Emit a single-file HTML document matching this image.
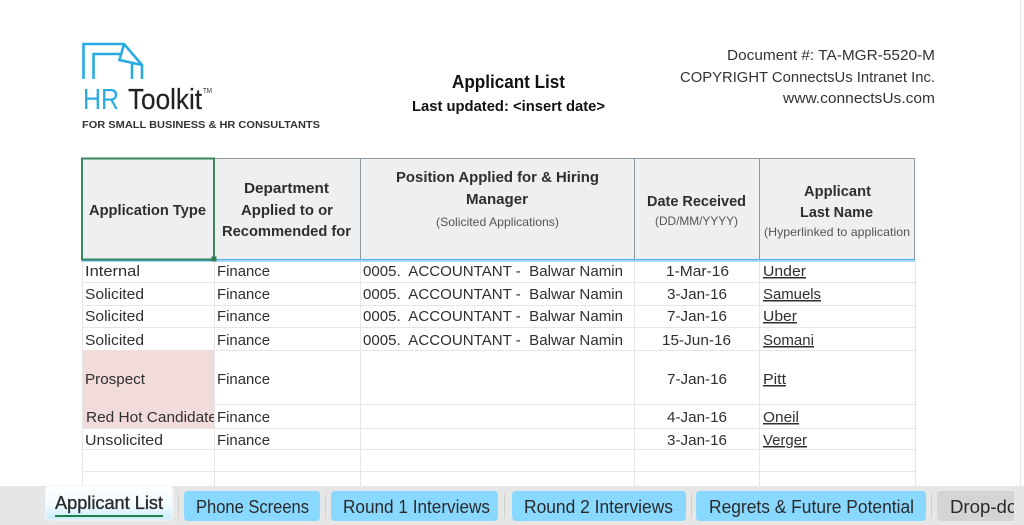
<!DOCTYPE html>
<html><head><meta charset="utf-8"><style>
html,body{margin:0;padding:0;background:#fff;width:1024px;height:525px;overflow:hidden}
svg{display:block}
text{font-family:"Liberation Sans",sans-serif;fill:#2f2f2f;font-size:15px}
.h{font-weight:bold;font-size:15px;fill:#2e2e2e}
.s{font-size:12px;fill:#555}
.t{font-size:18px;fill:#2a2a2a}
.l{text-decoration:underline}
</style></head><body>
<svg width="1024" height="525" viewBox="0 0 1024 525" xmlns="http://www.w3.org/2000/svg">
<defs><clipPath id="c"><rect x="82" y="400" width="132" height="30"/></clipPath>
<clipPath id="d"><rect x="937" y="488" width="77" height="37"/></clipPath>
<linearGradient id="g" x1="0" y1="0" x2="0" y2="1"><stop offset="0" stop-color="#fff"/><stop offset=".55" stop-color="#f2faff"/><stop offset="1" stop-color="#c9ecfd"/></linearGradient></defs>

<!-- logo -->
<g fill="none" stroke="#29abe2" stroke-width="2.600">
<path d="M83.500 79V44H124L142 65V79"/>
<path d="M93.500 79V54H120"/>
<path d="M124 44L119.500 60L142 65"/>
<path d="M132 63V79"/>
</g>
<text x="83" y="109" style="font-size:29px;fill:#29abe2" textLength="36" lengthAdjust="spacingAndGlyphs">HR</text>
<text x="128" y="109" style="font-size:29px;fill:#222;stroke:#222;stroke-width:.2" textLength="74" lengthAdjust="spacingAndGlyphs">Toolkit</text>
<text x="203" y="93" style="font-size:7px;fill:#333" textLength="9" lengthAdjust="spacingAndGlyphs">TM</text>
<text x="82" y="128" style="font-size:10px;font-weight:bold;fill:#333" textLength="238" lengthAdjust="spacingAndGlyphs">FOR SMALL BUSINESS &amp; HR CONSULTANTS</text>

<!-- titles -->
<text x="452" y="88" style="font-size:18px;font-weight:bold;fill:#111" textLength="113" lengthAdjust="spacingAndGlyphs">Applicant List</text>
<text x="412" y="111" style="font-size:15px;font-weight:bold;fill:#111" textLength="193" lengthAdjust="spacingAndGlyphs">Last updated: &lt;insert date&gt;</text>
<text x="727" y="60" style="fill:#333" textLength="208" lengthAdjust="spacingAndGlyphs">Document #: TA-MGR-5520-M</text>
<text x="680" y="82" style="fill:#333" textLength="255" lengthAdjust="spacingAndGlyphs">COPYRIGHT ConnectsUs Intranet Inc.</text>
<text x="783" y="103" style="fill:#333" textLength="152" lengthAdjust="spacingAndGlyphs">www.connectsUs.com</text>

<!-- header -->
<rect x="82" y="158" width="833" height="101" fill="#eeeff1"/>
<g stroke="#8f979f" stroke-width="1" fill="none">
<path d="M214.500 158V259M360.500 158V259M634.500 158V259M759.500 158V259M914.500 158V259M214 158.500H915"/>
</g>
<path d="M82 259.500H915" stroke="#4fb3e8" stroke-width="1"/>
<path d="M82 261H915" stroke="#4fb3e8" stroke-width="1"/>

<!-- pink -->
<rect x="82" y="350" width="132" height="78" fill="#f2dbdb"/>

<!-- grid -->
<g stroke="#e6e6e6" stroke-width="1" fill="none">
<path d="M82.500 262V486M214.500 262V486M360.500 262V486M634.500 262V486M759.500 262V486M915.500 262V486M1020.500 0V486"/>
<path d="M82 282.500H915M82 305.500H915M82 327.500H915M214 350.500H915M214 404.500H915M82 428.500H915M82 449.500H915M82 471.500H915"/>
</g>

<!-- selection -->
<rect x="82" y="158.500" width="132" height="101" fill="none" stroke="#3a8460" stroke-width="2"/>
<rect x="211.500" y="256.500" width="5" height="5" fill="#2f7d55"/>

<!-- header text -->
<text class="h" x="89" y="215" textLength="117" lengthAdjust="spacingAndGlyphs">Application Type</text>
<text class="h" x="244" y="193" textLength="85" lengthAdjust="spacingAndGlyphs">Department</text>
<text class="h" x="241" y="215" textLength="92" lengthAdjust="spacingAndGlyphs">Applied to or</text>
<text class="h" x="222" y="236" textLength="129" lengthAdjust="spacingAndGlyphs">Recommended for</text>
<text class="h" x="396" y="182" textLength="203" lengthAdjust="spacingAndGlyphs">Position Applied for &amp; Hiring</text>
<text class="h" x="466" y="204" textLength="62" lengthAdjust="spacingAndGlyphs">Manager</text>
<text class="s" x="436" y="226" textLength="123" lengthAdjust="spacingAndGlyphs">(Solicited Applications)</text>
<text class="h" x="647" y="206" textLength="99" lengthAdjust="spacingAndGlyphs">Date Received</text>
<text class="s" x="655" y="225" textLength="83" lengthAdjust="spacingAndGlyphs">(DD/MM/YYYY)</text>
<text class="h" x="804" y="196" textLength="67" lengthAdjust="spacingAndGlyphs">Applicant</text>
<text class="h" x="800" y="217" textLength="73" lengthAdjust="spacingAndGlyphs">Last Name</text>
<text class="s" x="764" y="236" textLength="146" lengthAdjust="spacingAndGlyphs">(Hyperlinked to application</text>

<!-- col 1 -->
<text x="85" y="276" textLength="55" lengthAdjust="spacingAndGlyphs">Internal</text>
<text x="85" y="299" textLength="59" lengthAdjust="spacingAndGlyphs">Solicited</text>
<text x="85" y="321" textLength="59" lengthAdjust="spacingAndGlyphs">Solicited</text>
<text x="85" y="345" textLength="59" lengthAdjust="spacingAndGlyphs">Solicited</text>
<text x="85" y="384" textLength="60" lengthAdjust="spacingAndGlyphs">Prospect</text>
<g clip-path="url(#c)"><text x="86" y="422" textLength="131" lengthAdjust="spacingAndGlyphs">Red Hot Candidate</text></g>
<text x="85" y="445" textLength="78" lengthAdjust="spacingAndGlyphs">Unsolicited</text>

<!-- col 2 -->
<text x="217" y="276" textLength="53" lengthAdjust="spacingAndGlyphs">Finance</text>
<text x="217" y="299" textLength="53" lengthAdjust="spacingAndGlyphs">Finance</text>
<text x="217" y="321" textLength="53" lengthAdjust="spacingAndGlyphs">Finance</text>
<text x="217" y="345" textLength="53" lengthAdjust="spacingAndGlyphs">Finance</text>
<text x="217" y="384" textLength="53" lengthAdjust="spacingAndGlyphs">Finance</text>
<text x="217" y="422" textLength="53" lengthAdjust="spacingAndGlyphs">Finance</text>
<text x="217" y="445" textLength="53" lengthAdjust="spacingAndGlyphs">Finance</text>

<!-- col 3 -->
<text x="363" y="276" xml:space="preserve" textLength="260" lengthAdjust="spacingAndGlyphs">0005.  ACCOUNTANT -  Balwar Namin</text>
<text x="363" y="299" xml:space="preserve" textLength="260" lengthAdjust="spacingAndGlyphs">0005.  ACCOUNTANT -  Balwar Namin</text>
<text x="363" y="321" xml:space="preserve" textLength="260" lengthAdjust="spacingAndGlyphs">0005.  ACCOUNTANT -  Balwar Namin</text>
<text x="363" y="345" xml:space="preserve" textLength="260" lengthAdjust="spacingAndGlyphs">0005.  ACCOUNTANT -  Balwar Namin</text>

<!-- col 4 -->
<text x="666" y="276" textLength="63" lengthAdjust="spacingAndGlyphs">1-Mar-16</text>
<text x="667" y="299" textLength="60" lengthAdjust="spacingAndGlyphs">3-Jan-16</text>
<text x="667" y="321" textLength="60" lengthAdjust="spacingAndGlyphs">7-Jan-16</text>
<text x="662" y="345" textLength="69" lengthAdjust="spacingAndGlyphs">15-Jun-16</text>
<text x="667" y="384" textLength="60" lengthAdjust="spacingAndGlyphs">7-Jan-16</text>
<text x="667" y="422" textLength="60" lengthAdjust="spacingAndGlyphs">4-Jan-16</text>
<text x="667" y="445" textLength="60" lengthAdjust="spacingAndGlyphs">3-Jan-16</text>

<!-- col 5 -->
<text class="l" x="763" y="276" textLength="43" lengthAdjust="spacingAndGlyphs">Under</text>
<text class="l" x="763" y="299" textLength="58" lengthAdjust="spacingAndGlyphs">Samuels</text>
<text class="l" x="763" y="321" textLength="34" lengthAdjust="spacingAndGlyphs">Uber</text>
<text class="l" x="763" y="345" textLength="51" lengthAdjust="spacingAndGlyphs">Somani</text>
<text class="l" x="763" y="384" textLength="23" lengthAdjust="spacingAndGlyphs">Pitt</text>
<text class="l" x="763" y="422" textLength="36" lengthAdjust="spacingAndGlyphs">Oneil</text>
<text class="l" x="763" y="445" textLength="44" lengthAdjust="spacingAndGlyphs">Verger</text>

<!-- tab bar -->
<rect x="0" y="486" width="1024" height="39" fill="#e6e6e6"/>
<rect x="45.500" y="486" width="127.500" height="34" rx="4" fill="url(#g)" stroke="#f5f5f5"/>
<text class="t" x="55" y="509" style="stroke:#2a2a2a;stroke-width:.35" textLength="108" lengthAdjust="spacingAndGlyphs">Applicant List</text>
<rect x="55" y="515" width="108" height="2" fill="#1d7f4c"/>
<g stroke="#cfcfcf"><path d="M178.500 494V518M325.500 494V518M504.500 494V518M691.500 494V518M931.500 494V518"/></g>
<g fill="#89d8ff">
<rect x="184" y="491" width="136" height="30" rx="4"/>
<rect x="331" y="491" width="167" height="30" rx="4"/>
<rect x="512" y="491" width="174" height="30" rx="4"/>
<rect x="696" y="491" width="230" height="30" rx="4"/>
</g>
<path d="M1014 491H941a4 4 0 0 0-4 4V517a4 4 0 0 0 4 4H1014Z" fill="#d4d4d4"/>
<text class="t" x="196" y="513" textLength="113" lengthAdjust="spacingAndGlyphs">Phone Screens</text>
<text class="t" x="343" y="513" textLength="147" lengthAdjust="spacingAndGlyphs">Round 1 Interviews</text>
<text class="t" x="524" y="513" textLength="149" lengthAdjust="spacingAndGlyphs">Round 2 Interviews</text>
<text class="t" x="709" y="513" textLength="205" lengthAdjust="spacingAndGlyphs">Regrets &amp; Future Potential</text>
<g clip-path="url(#d)"><text class="t" x="950" y="513" textLength="91" lengthAdjust="spacingAndGlyphs">Drop-down</text></g>
</svg>
</body></html>
